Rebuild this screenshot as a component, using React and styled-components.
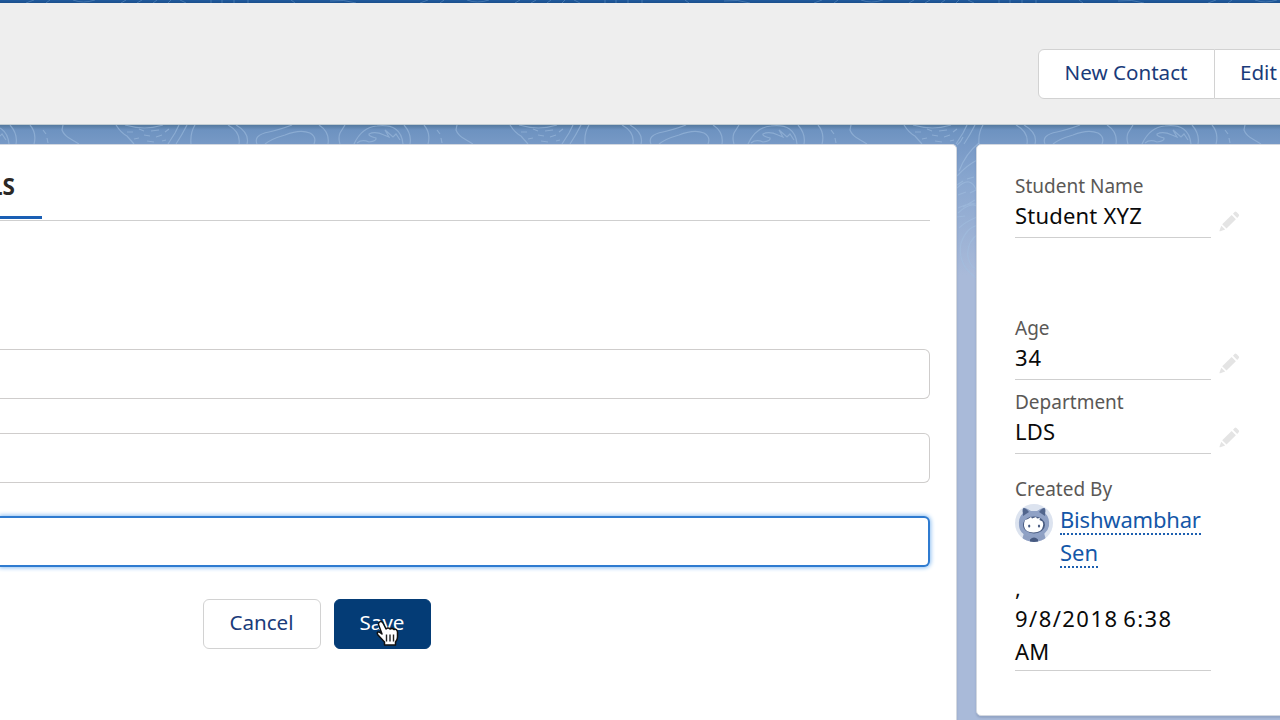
import styled, { createGlobalStyle } from "styled-components";

const GlobalStyle = createGlobalStyle`
  * {
    box-sizing: border-box;
  }
  body {
    margin: 0;
    overflow: hidden;
    font-family: "Noto Sans", "Open Sans", sans-serif;
  }
`;

const Page = styled.div`
  display: flex;
  flex-direction: column;
  width: 1280px;
  height: 720px;
  overflow: hidden;
`;

const TopStrip = styled.div`
  flex: none;
  display: flex;
  height: 3px;
  overflow: hidden;
  background: linear-gradient(#215b9e, #1b4f8c);
`;

const Header = styled.header`
  flex: none;
  display: flex;
  align-items: flex-start;
  height: 122px;
  padding: 45.5px 0 0 1038px;
  overflow: hidden;
  background: #eeeeee;
  border-bottom: 1px solid #c3cdd2;
`;

const ButtonGroup = styled.div`
  flex: none;
  display: flex;
`;

const Button = styled.button`
  flex: none;
  width: ${(p) => p.$width}px;
  height: 50px;
  padding: 0 1px 4px 0;
  border: 1px solid ${(p) => (p.$brand ? "#043c76" : "#d2d2d2")};
  border-left-width: ${(p) => (p.$joined ? 0 : 1)}px;
  border-radius: ${(p) => p.$radius || "6px"};
  background: ${(p) => (p.$brand ? "#043c76" : "#fff")};
  color: ${(p) => (p.$brand ? "#fff" : "#1a3b7a")};
  font-family: inherit;
  font-size: 20.6px;
  text-align: ${(p) => p.$align || "center"};
  text-indent: ${(p) => p.$indent || 0}px;
  white-space: nowrap;
`;

// backdrop and content share one grid cell
const Main = styled.main`
  flex: 1;
  display: grid;
  min-height: 0;
  overflow: hidden;
  background: linear-gradient(
    #54799f 0,
    #6d92c0 5px,
    #7799c6 19px,
    #8ba8d0 60px,
    #a9bad9 150px,
    #a9bad9 100%
  );
  & > * {
    grid-area: 1 / 1;
  }
`;

const Columns = styled.div`
  display: flex;
  align-items: flex-start;
  gap: 19px;
  width: 1400px;
  height: 595px;
  padding-top: 19px;
`;

const Card = styled.section`
  flex: none;
  width: ${(p) => p.$width}px;
  height: ${(p) => p.$height}px;
  padding: ${(p) => p.$padding};
  background: #fff;
  border: 1px solid #d3d8e0;
  border-left-width: ${(p) => (p.$flush ? 0 : 1)}px;
  border-radius: ${(p) => p.$radius};
  box-shadow: 0 2px 2px rgba(60, 80, 120, 0.2);
`;

const Tabs = styled.div`
  display: flex;
  height: 76px;
  border-bottom: 1px solid #cfcfcf;
`;

const Tab = styled.div`
  display: flex;
  justify-content: flex-end;
  width: 42px;
  height: 74px;
  padding: 25px 27px 0 0;
  border-bottom: 3px solid #1a5fb4;
  color: #2b2826;
  font-size: 22.5px;
  font-weight: 700;
  line-height: 33px;
`;

const Form = styled.div`
  display: flex;
  flex-direction: column;
  gap: 34px;
  padding-top: 128px;
`;

const Input = styled.input`
  width: 100%;
  height: 50px;
  border: 1px solid #cfcdcc;
  border-left: 0;
  border-radius: 0 6px 6px 0;
  outline: none;
  &:last-child {
    height: 51px;
    margin-top: -1px;
    border: 2px solid #2f7bd0;
    border-left: 0;
    box-shadow: 0 0 4px 1px #8fc0f2;
  }
`;

const Actions = styled.div`
  display: flex;
  gap: 13px;
  padding: 31.5px 0 0 203px;
`;

const SaveWrap = styled.div`
  position: relative;
`;

const Cursor = styled.svg`
  position: absolute;
  left: 41px;
  top: 21px;
`;

const Field = styled.div`
  display: flex;
  align-items: flex-end;
  gap: 8px;
  margin-bottom: ${(p) => p.$after || 0}px;
`;

const FieldBody = styled.div`
  width: 196px;
  padding-bottom: ${(p) => (p.$pad === undefined ? 5 : p.$pad)}px;
  border-bottom: 1px solid #cfcfcf;
`;

const Label = styled.div`
  color: #5a5856;
  font-size: 19px;
  line-height: 28px;
`;

const Value = styled.div`
  margin-top: ${(p) => (p.$shift === undefined ? -1 : p.$shift)}px;
  color: #0a0a0a;
  font-size: 22px;
  line-height: 33px;
  letter-spacing: ${(p) => p.$spacing || 0.2}px;
  word-spacing: ${(p) => p.$wordSpacing || 0}px;
  white-space: nowrap;
`;

const User = styled.div`
  display: flex;
  gap: 7px;
  height: 69px;
`;

const Names = styled.div`
  display: flex;
  flex-direction: column;
  align-items: flex-start;
`;

const NameLine = styled.a`
  height: 32px;
  margin-bottom: 1px;
  border-bottom: 2px dotted #1c5fb0;
  color: #1457a8;
  font-size: 22px;
  line-height: 32px;
  letter-spacing: ${(p) => p.$spacing || 0}px;
`;

const PencilIcon = styled.svg`
  flex: none;
  margin-bottom: 6px;
  fill: #e4e4e4;
`;

const Pencil = () => (
  <PencilIcon width="21" height="21" viewBox="0 0 21 21">
    <path d="M3.2 13.3 12.6 4l4.3 4.3-9.4 9.3z" />
    <path d="m14 2.7 1.5-1.6a1.4 1.4 0 0 1 2 0l2.2 2.2a1.4 1.4 0 0 1 0 2L18.2 6.9z" />
    <path d="M2.3 14.7.5 19.4q-.3 1.1.8.9l4.9-1.7z" />
  </PencilIcon>
);

const AvatarIcon = styled.svg`
  flex: none;
  margin-top: -3px;
`;

const Avatar = () => (
  <AvatarIcon width="38" height="46" viewBox="0 0 38 46">
    <clipPath id="face">
      <circle cx="19" cy="23" r="19" />
    </clipPath>
    <g clipPath="url(#face)">
      <rect width="38" height="46" fill="#dce3ef" />
      <path d="M9 33q10-5 20 0l3 10H6z" fill="#8e9fc2" />
      <path
        d="M8 13q-1-5 1-5 3 0 7 3h6q4-3 7-3 2 0 1 5 5 5 4 13-2 10-15 11Q5 36 4 26q-1-8 4-13z"
        fill="#8fa1c5"
      />
      <path d="M8 14q-1-6 1-6 3 1 5 4l-6 4zM30 14q1-6-1-6-3 1-5 4l6 4z" fill="#51658c" />
      <ellipse cx="19" cy="25" rx="11" ry="8.5" fill="#475a80" />
      <path
        d="M9 26q0-4 1-6l3-1 3-2 1 1.5 4-1.5 1 1.5 3-.5-.5 2 3 1.5q1 2 .5 4.500-1 6.500-9.500 6.500T9 26z"
        fill="#fff"
      />
      <ellipse cx="14.2" cy="26" rx="1.1" ry="1.5" fill="#475a80" />
      <ellipse cx="24" cy="26" rx="1.1" ry="1.5" fill="#475a80" />
      <path d="M15 39.5q4-4 8 0v3h-8z" fill="#475a80" />
    </g>
  </AvatarIcon>
);

const Contours = () => (
  <svg width="1280" height="595" fill="none" stroke="#a3bfe0" strokeOpacity=".55" strokeWidth="1.2">
    <defs>
      <g id="contour">
        <path d="M10 0q8 9 6 19M30 0q7 8 4 19M43 5l3 4M47 13l1 5" />
        <path d="M63 0l-1 5q2 5 7 8l10 6M116 0q5 8 11 11l7 8M125 0q20 6 38 0" />
        <path d="M127 7h6M139 4l5 2M151 6l8-1M134 14l5-1M144 10l6 1M156 12l6-2M147 16l7 1M165 7l4-3M162 16l4-1" />
        <path d="M179 0l-4 8-7 11M187 0q-5 10-11 19M195 0q-5 8-4 19" />
        <path d="M228 0q13 7 11 19M236 0q14 8 11 19" />
        <path d="M257 19q-4-9 12-12 10-2 23-7M265 19q6-5 20-9 15-6 25-2 7 4 4 11" />
        <path d="M319 0q11 7 9 19M345 0l-5 8q-2 5 0 11M354 19Q362 2 377 1q24-3 26 18" />
        <path d="M357 18q5-4 12-1 8-1 7-4-8-2-7-4 6-3 15 1l5 2-4-7 8 7 3-3 4 6" />
      </g>
    </defs>
    {[-394, 0, 394, 788, 1182].map((x) => (
      <use key={x} href="#contour" x={x} />
    ))}
    <path d="M979 18q-13 10-20 28M979 34q-12 6-22 17M957 63q14-14 20 4M957 60l6-4M967 54l7-2M958 70l8-3M970 68l6-3M958 83q10-5 18-4M958 88q13-12 20-6M977 92q-12 5-18 11M978 100q-12 3-17 18-4 23 17 36M978 109q-12 9-10 23 2 10 10 13M957 20q4-3 6-8M975 75l-12 7M957 92l8-1" />
  </svg>
);

const StripContours = () => (
  <svg width="1280" height="3" fill="none" stroke="#5b8cc0" strokeOpacity=".6">
    {[-394, 0, 394, 788, 1182].map((x) => (
      <path
        key={x}
        transform={`translate(${x})`}
        d="M26 3l8-3M50 0l-4 3M73 0q10 4 22 0M126 0l-5 3M142 0l-5 3M157 0l-4 3M171 0l-3 3M180 0l6 3M211 0v3M222 0v3M234 0v3M248 0v3M291 0l4 3M330 1q14-2 26 2"
      />
    ))}
  </svg>
);

const Hand = () => (
  <Cursor width="26" height="28" viewBox="0 0 26 28">
    <path
      d="M4.5 2q2-1.500 3.500 1l3 6q2-2 4 0 2.500-1.500 4 .5 3-1 3.500 2.500v5q0 3-2 5v3h-11v-3L3 15q-1.500-2.500 0-3t4 2L3.500 4.500Q3.200 2.700 4.500 2z"
      fill="#fff"
      stroke="#111"
      strokeWidth="1.5"
      strokeLinejoin="round"
    />
    <path d="M11.500 14.500v7M15 14.500v7M18.500 14.500v7" stroke="#222" strokeWidth="1.4" />
  </Cursor>
);

const App = () => (
  <Page>
    <GlobalStyle />
    <TopStrip>
      <StripContours />
    </TopStrip>
    <Header>
      <ButtonGroup>
        <Button $width={177} $radius="6px 0 0 6px">
          New Contact
        </Button>
        <Button $width={90} $radius="0" $joined $align="left" $indent={25}>
          Edit
        </Button>
      </ButtonGroup>
    </Header>
    <Main>
      <Contours />
      <Columns>
        <Card $width={957} $height={610} $padding="0 26px 0 0" $radius="0 5px 0 0" $flush>
          <Tabs>
            <Tab>LS</Tab>
          </Tabs>
          <Form>
            <Input />
            <Input />
            <Input />
          </Form>
          <Actions>
            <Button $width={118}>Cancel</Button>
            <SaveWrap>
              <Button $width={97} $brand>
                Save
              </Button>
              <Hand />
            </SaveWrap>
          </Actions>
        </Card>
        <Card $width={340} $height={572} $padding="27px 0 0 38px" $radius="5px">
          <Field $after={76}>
            <FieldBody>
              <Label>Student Name</Label>
              <Value>Student XYZ</Value>
            </FieldBody>
            <Pencil />
          </Field>
          <Field $after={8}>
            <FieldBody>
              <Label>Age</Label>
              <Value $spacing={0.8}>34</Value>
            </FieldBody>
            <Pencil />
          </Field>
          <Field $after={21}>
            <FieldBody>
              <Label>Department</Label>
              <Value>LDS</Value>
            </FieldBody>
            <Pencil />
          </Field>
          <Field>
            <FieldBody $pad={2}>
              <Label>Created By</Label>
              <User>
                <Avatar />
                <Names>
                  <NameLine $spacing={-0.2}>Bishwambhar</NameLine>
                  <NameLine>Sen</NameLine>
                </Names>
              </User>
              <Value>,</Value>
              <Value $spacing={1.45} $wordSpacing={-2.5} $shift={-2}>
                9/8/2018 6:38
              </Value>
              <Value $shift={0}>AM</Value>
            </FieldBody>
          </Field>
        </Card>
      </Columns>
    </Main>
  </Page>
);

export default App;
